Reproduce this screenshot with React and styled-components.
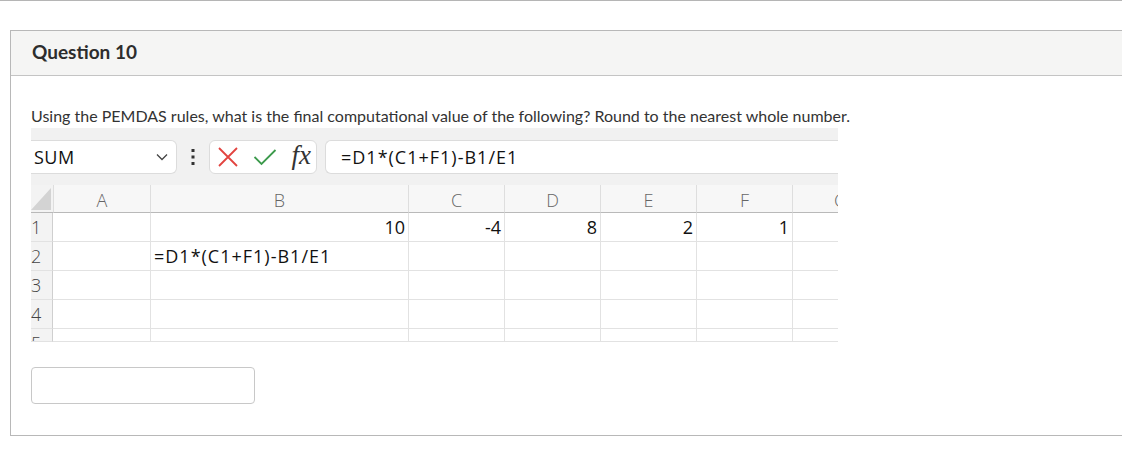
import React from "react";
import styled, { createGlobalStyle } from "styled-components";

const GlobalStyle = createGlobalStyle`
  html, body {
    margin: 0;
    padding: 0;
    background: #ffffff;
    overflow: hidden;
  }
  body {
    font-family: Lato, "Noto Sans", sans-serif;
    color: #2d2d2d;
  }
`;

const Page = styled.div`
  border-top: 1px solid #b5b5b5;
  padding-top: 29px;
  padding-left: 10px;
`;

const Card = styled.section`
  width: 1140px;
  border: 1px solid #b8b8b8;
  box-sizing: border-box;
`;

const CardHeader = styled.header`
  height: 45px;
  display: flex;
  align-items: center;
  padding-left: 21px;
  padding-bottom: 3px;
  box-sizing: border-box;
  background: #f5f5f4;
  border-bottom: 1px solid #c4c4c4;
`;

const Title = styled.h2`
  margin: 0;
  font-size: 19px;
  font-weight: 700;
  color: #2d2d2d;
`;

const CardBody = styled.div`
  padding: 30px 20px 31px 20px;
`;

const Prompt = styled.p`
  margin: 0 0 2px 0;
  font-size: 16px;
  line-height: 20px;
  color: #333;
`;

const Sheet = styled.div`
  width: 807px;
  overflow: hidden;
  font-family: "Open Sans", "Noto Sans", sans-serif;
`;

const FormulaBar = styled.div`
  display: flex;
  align-items: center;
  height: 57px;
  padding: 12px 0 11px 0;
  box-sizing: border-box;
  background: #f1f1f1;
`;

const Box = styled.div`
  height: 34px;
  box-sizing: border-box;
  background: #fff;
  border: 1px solid #dcdcdc;
  border-radius: 6px;
  display: flex;
  align-items: center;
`;

const NameBox = styled(Box)`
  width: 146px;
  border-left: none;
  border-top-left-radius: 0;
  border-bottom-left-radius: 0;
  padding: 0 8px 0 3px;
  justify-content: space-between;
  font-size: 18px;
  letter-spacing: 0.5px;
  color: #111;
`;

const Dots = styled.div`
  width: 32px;
  display: flex;
  justify-content: center;
`;

const ActionBox = styled(Box)`
  width: 108px;
  margin-right: 8px;
  padding: 0 5px 0 7px;
  justify-content: space-between;
`;

const Fx = styled.span`
  font-family: "Liberation Serif", "DejaVu Serif", serif;
  font-style: italic;
  font-size: 27px;
  color: #333;
  line-height: 1;
  margin-top: -4px;
`;

const FormulaBox = styled(Box)`
  flex: 1;
  border-right: none;
  border-top-right-radius: 0;
  border-bottom-right-radius: 0;
  padding-left: 15px;
  font-size: 18px;
  letter-spacing: 1px;
  color: #111;
`;

const Grid = styled.div`
  display: grid;
  grid-template-columns: 22px 97px 258px 96px 96px 96px 96px 96px;
  grid-template-rows: 28px repeat(4, 29px) 13px;
  width: 857px;
`;

const Corner = styled.div`
  background: #f3f3f3;
  border-bottom: 1px solid #b9b9b9;
  display: flex;
  align-items: flex-end;
  justify-content: flex-end;
  padding: 0 2px 2px 0;
  box-sizing: border-box;
`;

const ColHead = styled.div`
  background: #f7f7f7;
  border-left: 1px solid #dedede;
  border-bottom: 1px solid #b9b9b9;
  display: flex;
  align-items: center;
  justify-content: center;
  font-size: 18px;
  font-weight: 300;
  color: #666;
  padding-top: 3px;
  box-sizing: border-box;
`;

const RowHead = styled.div`
  background: #f3f3f3;
  border-bottom: 1px solid #e2e2e2;
  border-right: 1px solid #cfcfcf;
  font-size: 18px;
  font-weight: 300;
  color: #444;
  line-height: 29px;
  overflow: hidden;
  box-sizing: border-box;
`;

const Cell = styled.div`
  border-left: ${(p) => (p.$first ? "none" : "1px solid #e2e2e2")};
  border-bottom: 1px solid #e2e2e2;
  font-size: 18px;
  letter-spacing: ${(p) => (p.$num ? "0" : "1px")};
  color: #111;
  display: flex;
  align-items: center;
  justify-content: ${(p) => (p.$num ? "flex-end" : "flex-start")};
  padding: 0 3px;
  white-space: nowrap;
  box-sizing: border-box;
`;

const Answer = styled.input`
  display: block;
  margin-top: 25px;
  width: 224px;
  height: 37px;
  box-sizing: border-box;
  border: 1px solid #c8c8c8;
  border-radius: 4px;
  background: #fff;
  font-family: Lato, sans-serif;
  font-size: 15px;
  outline: none;
`;

const Chevron = () => (
  <svg width="12" height="8" viewBox="0 0 12 8">
    <path d="M1 1.5 L6 6.5 L11 1.5" fill="none" stroke="#444" strokeWidth="1.3" />
  </svg>
);

const VDots = () => (
  <svg width="4" height="18" viewBox="0 0 4 18">
    <rect x="0.5" y="1" width="3" height="3" fill="#333" />
    <rect x="0.5" y="7.5" width="3" height="3" fill="#333" />
    <rect x="0.5" y="14" width="3" height="3" fill="#333" />
  </svg>
);

const Cross = () => (
  <svg width="22" height="22" viewBox="0 0 22 22">
    <path d="M2 2 L20 20 M20 2 L2 20" stroke="#e2433f" strokeWidth="1.8" fill="none" />
  </svg>
);

const Check = () => (
  <svg width="24" height="20" viewBox="0 0 24 20">
    <path d="M1.5 10 L8.5 17 L22.5 3" stroke="#3c9a4c" strokeWidth="1.8" fill="none" />
  </svg>
);

const CornerMark = () => (
  <svg width="20" height="22" viewBox="0 0 20 22">
    <path d="M20 0 L20 22 L0 22 Z" fill="#d3d3d3" />
  </svg>
);

const columns = ["A", "B", "C", "D", "E", "F", "G"];
const rows = [
  ["", "10", "-4", "8", "2", "1", ""],
  ["", "=D1*(C1+F1)-B1/E1", "", "", "", "", ""],
  ["", "", "", "", "", "", ""],
  ["", "", "", "", "", "", ""],
  ["", "", "", "", "", "", ""],
];

const Row = ({ n, cells }) => (
  <>
    <RowHead>{n}</RowHead>
    {cells.map((v, i) => (
      <Cell key={i} $first={i === 0} $num={/^-?\d+$/.test(v)}>
        {v}
      </Cell>
    ))}
  </>
);

export default function App() {
  return (
    <>
      <GlobalStyle />
      <Page>
        <Card>
          <CardHeader>
            <Title>Question 10</Title>
          </CardHeader>
          <CardBody>
            <Prompt>
              Using the PEMDAS rules, what is the final computational value of the following? Round to
              the nearest whole number.
            </Prompt>
            <Sheet>
              <FormulaBar>
                <NameBox>
                  <span>SUM</span>
                  <Chevron />
                </NameBox>
                <Dots>
                  <VDots />
                </Dots>
                <ActionBox>
                  <Cross />
                  <Check />
                  <Fx>fx</Fx>
                </ActionBox>
                <FormulaBox>=D1*(C1+F1)-B1/E1</FormulaBox>
              </FormulaBar>
              <Grid>
                <Corner>
                  <CornerMark />
                </Corner>
                {columns.map((c) => (
                  <ColHead key={c}>{c}</ColHead>
                ))}
                {rows.map((r, i) => (
                  <Row key={i} n={i + 1} cells={r} />
                ))}
              </Grid>
            </Sheet>
            <Answer type="text" aria-label="Answer" />
          </CardBody>
        </Card>
      </Page>
    </>
  );
}
